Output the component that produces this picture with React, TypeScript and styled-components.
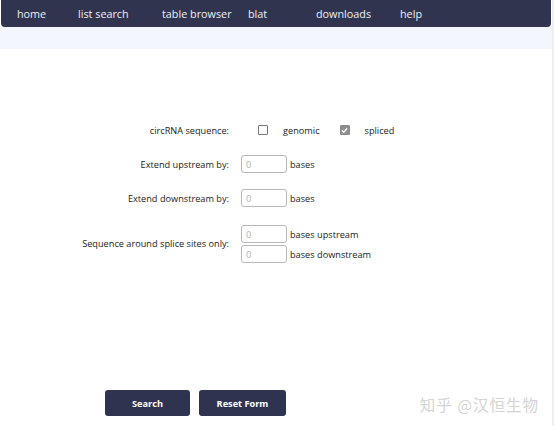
import React from "react";
import styled, { createGlobalStyle } from "styled-components";

const Global = createGlobalStyle`
  html, body { margin: 0; padding: 0; background: #ffffff; }
  body { font-family: "Open Sans", "DejaVu Sans", sans-serif; width: 554px; height: 426px; overflow: hidden; }
`;

const Page = styled.div`
  position: relative;
  width: 554px;
  height: 426px;
  box-sizing: border-box;
  border-right: 2px solid #eeeff2;
`;

const NavBar = styled.nav`
  height: 27px;
  margin: 0 1px 0 1px;
  background: #31344f;
  border-radius: 0 0 4px 4px;
  display: flex;
  align-items: center;
  padding-left: 16px;
`;

const NavItem = styled.a<{ $w: number }>`
  width: ${(p) => p.$w}px;
  color: #eef0f6;
  font-size: 10.8px;
  text-decoration: none;
  white-space: nowrap;
  line-height: 27px;
`;

const Strip = styled.div`
  height: 22px;
  background: #f3f6fd;
`;

const FormGrid = styled.div`
  display: grid;
  grid-template-columns: 229px auto;
  column-gap: 12px;
  row-gap: 16px;
  padding-top: 72px;
  align-items: center;
  font-size: 9.2px;
  color: #222;
`;

const Label = styled.div`
  text-align: right;
  white-space: nowrap;
`;

const Controls = styled.div`
  display: flex;
  align-items: center;
  height: 18px;
`;

const Stack = styled.div`
  display: flex;
  flex-direction: column;
  gap: 2px;
  margin-top: 2px;
`;

const Box = styled.span<{ $checked?: boolean }>`
  display: inline-flex;
  align-items: center;
  justify-content: center;
  width: 8px;
  height: 8px;
  border: 1px solid ${(p) => (p.$checked ? "#8a8a8a" : "#777")};
  background: ${(p) => (p.$checked ? "#8f8f8f" : "#fff")};
  border-radius: 1px;
  margin-left: ${(p) => (p.$checked ? 20 : 17)}px;
  margin-right: 15px;
`;

const Input = styled.input`
  box-sizing: border-box;
  width: 46px;
  height: 18px;
  border: 1px solid #b8b8b8;
  border-radius: 3px;
  padding: 0 0 0 4px;
  font-family: inherit;
  font-size: 9.2px;
  color: #aaa;
  margin-right: 3px;
  &::placeholder { color: #b0b0b0; }
`;

const Text = styled.span`
  white-space: nowrap;
`;

const Buttons = styled.div`
  display: flex;
  gap: 9px;
  padding-left: 105px;
  margin-top: 127px;
`;

const Button = styled.button<{ $w: number }>`
  width: ${(p) => p.$w}px;
  height: 26px;
  background: #2f3350;
  color: #fff;
  border: none;
  border-radius: 3px;
  font-family: inherit;
  font-size: 9.2px;
  font-weight: 700;
`;

const Watermark = styled.div`
  position: absolute;
  right: 13px;
  bottom: 11px;
  font-family: "Noto Sans CJK SC", sans-serif;
  font-size: 15.5px;
  color: #d4d4d4;
  letter-spacing: 1px;
`;

const Check = () => (
  <svg width="7" height="7" viewBox="0 0 7 7">
    <path d="M1 3.6 L2.8 5.3 L6 1.5" stroke="#fff" strokeWidth="1.4" fill="none" />
  </svg>
);

export default function App() {
  const nav: [string, number][] = [
    ["home", 61],
    ["list search", 84],
    ["table browser", 86],
    ["blat", 68],
    ["downloads", 84],
    ["help", 40],
  ];
  return (
    <Page>
      <Global />
      <NavBar>
        {nav.map(([t, w]) => (
          <NavItem key={t} $w={w} href="#">
            {t}
          </NavItem>
        ))}
      </NavBar>
      <Strip />
      <FormGrid>
        <Label>circRNA sequence:</Label>
        <Controls>
          <Box />
          <Text>genomic</Text>
          <Box $checked>
            <Check />
          </Box>
          <Text>spliced</Text>
        </Controls>
        <Label>Extend upstream by:</Label>
        <Controls>
          <Input placeholder="0" />
          <Text>bases</Text>
        </Controls>
        <Label>Extend downstream by:</Label>
        <Controls>
          <Input placeholder="0" />
          <Text>bases</Text>
        </Controls>
        <Label>Sequence around splice sites only:</Label>
        <Stack>
          <Controls>
            <Input placeholder="0" />
            <Text>bases upstream</Text>
          </Controls>
          <Controls>
            <Input placeholder="0" />
            <Text>bases downstream</Text>
          </Controls>
        </Stack>
      </FormGrid>
      <Buttons>
        <Button $w={85}>Search</Button>
        <Button $w={87}>Reset Form</Button>
      </Buttons>
      <Watermark>知乎 @汉恒生物</Watermark>
    </Page>
  );
}
